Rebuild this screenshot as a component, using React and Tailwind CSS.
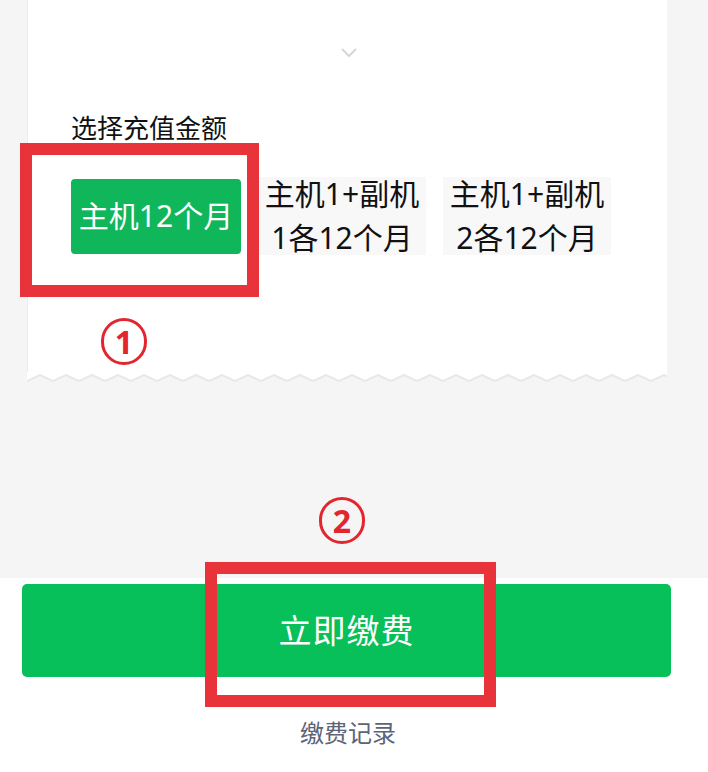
import { useState } from "react";

const plans = [
  { id: "host", lines: ["主机12个月"] },
  { id: "host-sub1", lines: ["主机1+副机", "1各12个月"] },
  { id: "host-sub2", lines: ["主机1+副机", "2各12个月"] },
];

function ZigzagEdge() {
  return (
    <svg className="block w-full h-[16px]" viewBox="0 0 640 16" preserveAspectRatio="none">
      <defs>
        <pattern id="teeth" width="26" height="16" patternUnits="userSpaceOnUse">
          <path d="M0 0 L0 8 L13 2 L26 8 L26 0 Z" fill="#ffffff" />
          <path d="M0 9 L13 3 L26 9" fill="none" stroke="#e8e8e8" strokeWidth="2" />
        </pattern>
      </defs>
      <rect width="640" height="16" fill="url(#teeth)" />
    </svg>
  );
}

function CircledMark({ n }) {
  return (
    <div className="w-[46px] h-[47px] rounded-full border-[3px] border-[#e3262d] flex items-center justify-center text-[#e3262d] text-[32px] font-bold leading-none">
      {n}
    </div>
  );
}

export default function App() {
  const [selected, setSelected] = useState("host");

  return (
    <div
      className="w-[708px] h-[772px] bg-[#f5f5f5] flex flex-col overflow-hidden"
      style={{ fontFamily: '"Noto Sans", "Noto Sans CJK SC", sans-serif' }}
    >
      <div className="h-[578px] pl-[27px]">
        <div className="w-[640px]">
          <div className="relative bg-white h-[372px] border-l border-[#ececec] pt-[47px]">
            {/* collapse arrow */}
            <div className="flex justify-center pl-[2px]">
              <svg width="18" height="12" viewBox="0 0 18 12">
                <path d="M2 2 L9 9 L16 2" fill="none" stroke="#d6d6d6" strokeWidth="2" />
              </svg>
            </div>

            <p className="mt-[54px] ml-[43px] text-[26px] leading-[30px] text-[#111]">选择充值金额</p>

            <div className="mt-[34px] ml-[43px] flex items-center gap-[17px]">
              {plans.map((p) => {
                const active = selected === p.id;
                return (
                  <button
                    key={p.id}
                    onClick={() => setSelected(p.id)}
                    className={
                      active
                        ? "w-[170px] h-[75px] rounded-[4px] bg-[#0fb65a] text-white text-[30px] leading-[44px] flex flex-col items-center justify-center"
                        : "w-[168px] h-[78px] bg-[#f8f8f8] text-[#111] text-[30px] leading-[44px] flex flex-col items-center justify-center"
                    }
                  >
                    {p.lines.map((l) => (
                      <span key={l} className="whitespace-nowrap">{l}</span>
                    ))}
                  </button>
                );
              })}
            </div>

            {/* annotation ① */}
            <div className="absolute left-[-8px] top-[143px] w-[239px] h-[154px] border-[12px] border-[#e8333b]" />
            <div className="absolute left-[73px] top-[318px]">
              <CircledMark n="1" />
            </div>
          </div>
          <ZigzagEdge />
        </div>
      </div>

      <div className="relative flex-1 bg-white flex flex-col items-center">
        <div className="absolute left-[319px] top-[-81px]">
          <CircledMark n="2" />
        </div>

        <button className="self-start ml-[22px] mt-[6px] w-[649px] h-[93px] rounded-[5px] bg-[#07c05a] text-white text-[33px] tracking-[1px]">
          立即缴费
        </button>
        <div className="absolute left-[205px] top-[-16px] w-[291px] h-[145px] border-[12px] border-[#e8333b]" />

        <a className="mt-[41px] mr-[12px] text-[24px] leading-[30px] text-[#5b6478]">缴费记录</a>
      </div>
    </div>
  );
}
